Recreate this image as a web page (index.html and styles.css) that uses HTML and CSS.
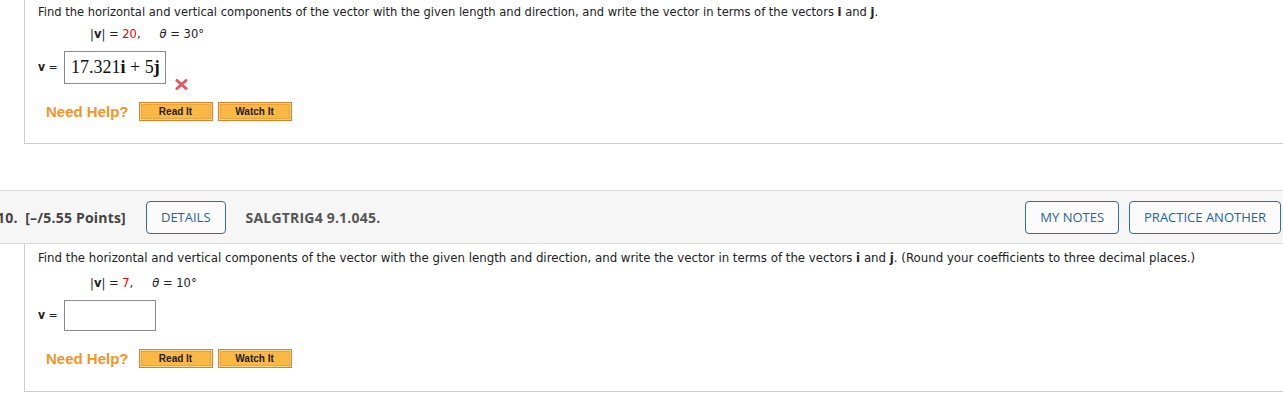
FILE: index.html
```html
<!DOCTYPE html>
<html>
<head>
<meta charset="utf-8">
<link rel="stylesheet" href="styles.css">
</head>
<body>
<div class="qbox qbox-top">
  <p class="prompt">Find the horizontal and vertical components of the vector with the given length and direction, and write the vector in terms of the vectors <b>i</b> and <b>j</b>.</p>
  <p class="given">|<b>v</b>| = <span class="red">20</span>,<span class="theta"><i>θ</i> = 30°</span></p>
  <div class="answer-row">
    <span class="vlabel"><b>v</b> =</span>
    <span class="ansbox filled"><span class="math">17.321<b>i</b> + 5<b>j</b></span></span>
    <svg class="wrong" width="13" height="11" viewBox="0 0 13 11"><path d="M2 1.5 L11 9.5 M11 1.5 L2 9.5" stroke="#e8585a" stroke-width="3" stroke-linecap="round"/></svg>
  </div>
  <div class="help-row">
    <span class="need">Need Help?</span>
    <span class="hbtn">Read It</span>
    <span class="hbtn">Watch It</span>
  </div>
</div>

<div class="qheader">
  <span class="qnum">10.&nbsp; [–/5.55 Points]</span>
  <span class="obtn">DETAILS</span>
  <span class="qcode">SALGTRIG4 9.1.045.</span>
  <span class="spacer"></span>
  <span class="obtn">MY NOTES</span>
  <span class="obtn">PRACTICE ANOTHER</span>
</div>

<div class="qbox qbox-bottom">
  <p class="prompt wide">Find the horizontal and vertical components of the vector with the given length and direction, and write the vector in terms of the vectors <b>i</b> and <b>j</b>. (Round your coefficients to three decimal places.)</p>
  <p class="given">|<b>v</b>| = <span class="red">7</span>,<span class="theta"><i>θ</i> = 10°</span></p>
  <div class="answer-row">
    <span class="vlabel"><b>v</b> =</span>
    <span class="ansbox empty"></span>
  </div>
  <div class="help-row">
    <span class="need">Need Help?</span>
    <span class="hbtn">Read It</span>
    <span class="hbtn">Watch It</span>
  </div>
</div>
</body>
</html>
```
FILE: styles.css
```css
body {
  margin: 0;
  font-family: "DejaVu Sans Condensed", "DejaVu Sans", sans-serif;
  font-size: 12.8px;
  color: #222;
  background: #fff;
  overflow: hidden;
}
p { margin: 0; white-space: nowrap; }
.qbox {
  margin-left: 24px;
  border-left: 1px solid #cfcfcf;
  border-bottom: 1px solid #cfcfcf;
  padding-left: 13px;
  box-sizing: border-box;
}
.qbox-top { height: 144px; padding-top: 4px; }
.qbox-bottom { height: 148px; padding-top: 6px; }
.prompt { line-height: 16px; }
.prompt.wide { font-size: 13.1px; }
.given { margin-left: 52px; line-height: 16px; }
.qbox-top .given { margin-top: 6px; }
.qbox-bottom .given { margin-top: 9px; }
.theta { margin-left: 19px; }
.red { color: #e00; }
.answer-row {
  display: flex;
  align-items: center;
  margin-top: 8px;
}
.qbox-top .answer-row { height: 34px; }
.qbox-bottom .answer-row { height: 32px; }
.vlabel { width: 26px; font-size: 12px; }
.ansbox {
  border: 1px solid #8a8a8a;
  box-sizing: border-box;
  display: flex;
  align-items: center;
}
.ansbox.filled { width: 102px; height: 33px; padding-left: 6px; }
.ansbox.empty { width: 92px; height: 31px; }
.math {
  font-family: "Liberation Serif", "DejaVu Serif", serif;
  font-size: 18px;
  color: #111;
  white-space: nowrap;
}
.wrong {
  align-self: flex-end;
  margin-left: 9px;
  margin-bottom: -6px;
}
.help-row {
  display: flex;
  align-items: center;
  margin-left: 8px;
  margin-top: 18px;
}
.need {
  font-family: "Liberation Sans", Arial, sans-serif;
  font-size: 15px;
  font-weight: bold;
  color: #f39426;
  margin-right: 10px;
}
.hbtn {
  font-family: "Liberation Sans", Arial, sans-serif;
  font-size: 10px;
  font-weight: bold;
  color: #222;
  width: 74px;
  height: 19px;
  box-sizing: border-box;
  border: 1px solid #d9822b;
  background: #fbb845;
  box-shadow: inset 0 0 0 1px #fcd48a, inset 0 0 0 2px #eea23a;
  display: flex;
  align-items: center;
  justify-content: center;
  margin-right: 5px;
}
.qheader {
  margin-top: 46px;
  height: 54px;
  box-sizing: border-box;
  border-top: 1px solid #dcdcdc;
  border-bottom: 1px solid #dcdcdc;
  background: #f6f6f6;
  display: flex;
  align-items: center;
  margin-left: -3px;
}
.qnum {
  font-family: "Open Sans", sans-serif;
  font-weight: bold;
  font-size: 14px;
  letter-spacing: 0.2px;
  color: #444;
  margin-right: 20px;
}
.obtn {
  font-family: "Open Sans", sans-serif;
  font-size: 13px;
  color: #1f66a0;
  border: 1px solid #2e6fa6;
  border-radius: 4px;
  height: 33px;
  box-sizing: border-box;
  padding: 0 14px;
  display: flex;
  align-items: center;
  background: #fbfbfb;
}
.qcode {
  font-family: "Open Sans", sans-serif;
  font-weight: bold;
  font-size: 14px;
  letter-spacing: 0.2px;
  color: #555;
  margin-left: 20px;
}
.spacer { flex: 1; }
.obtn + .obtn { margin-left: 10px; }
.qheader .obtn:last-child { margin-right: 2px; }
```
